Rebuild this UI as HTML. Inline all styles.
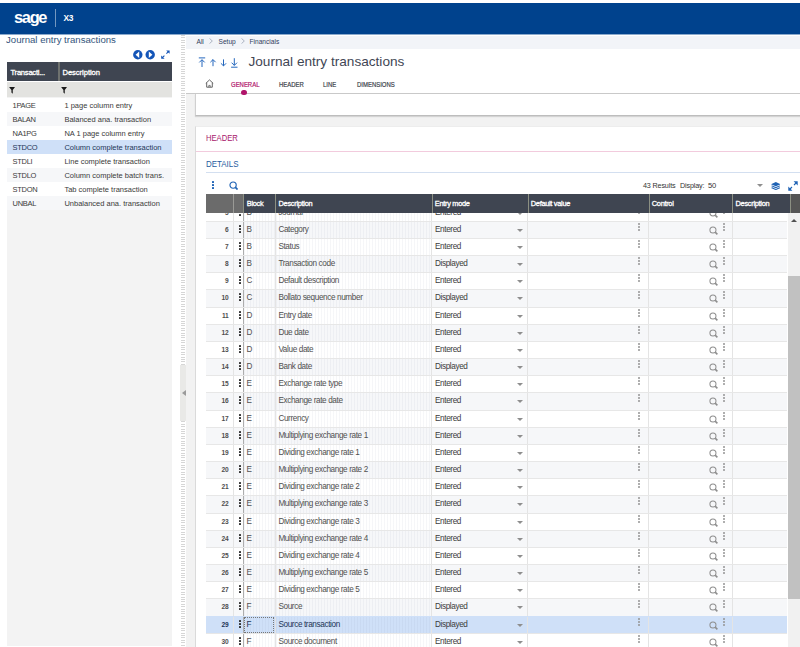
<!DOCTYPE html><html><head><meta charset="utf-8"><title>Journal entry transactions</title><style>*{box-sizing:border-box;margin:0;padding:0}
html,body{width:800px;height:647px;overflow:hidden;background:#fff}
body{position:relative;font-family:"Liberation Sans",sans-serif;color:#333;font-size:8px}
.abs{position:absolute}
.bar{position:absolute;left:0;top:3px;width:800px;height:31px;background:#00428d;border-bottom:1px solid #8aa9cc;box-sizing:content-box}
.logo{position:absolute;left:14px;top:5px;color:#fff;font-weight:700;font-size:16.4px;letter-spacing:-1.3px;line-height:18px}
.bdiv{position:absolute;left:55px;top:6px;width:1px;height:18px;background:rgba(255,255,255,.45)}
.x3{position:absolute;left:63.4px;top:11.4px;color:#fff;font-weight:700;font-size:8.4px;line-height:9px;letter-spacing:-0.2px}
/* left panel */
.ltitle{position:absolute;left:6px;top:33.8px;font-size:9.6px;line-height:11px;color:#34557c;white-space:nowrap}
.lbg{position:absolute;left:7px;top:97px;width:165px;height:549px;background:#f3f3f3}
.lhead{position:absolute;left:7px;top:62.4px;width:165px;height:19px;background:#3f4551;color:#fff;font-weight:400;font-size:7.6px;line-height:19px;white-space:nowrap;-webkit-text-stroke:.3px #fff}
.lhead span{position:absolute;top:0.4px;letter-spacing:-0.05px}
.lhead .sep{position:absolute;left:51px;top:0;width:2px;height:19px;background:#6f726f}
.lfilt{position:absolute;left:7px;top:82.4px;width:165px;height:15px;background:#e3e3e0}
.lrow{position:absolute;left:7px;width:165px;height:14px;background:#fff;font-size:7.5px;line-height:15px;color:#3a3a3a;white-space:nowrap}
.lrow.alt{background:#f6f7f9}
.lrow.sel{background:#cfe0f8;color:#1d3557}
.lrow span{position:absolute;top:0}
.lc{left:5.6px;letter-spacing:-0.3px}.ld{left:57.4px}
/* splitter */
.split{position:absolute;left:180px;top:35px;width:6px;height:612px;background:#fff}
.split:before,.split:after{content:"";position:absolute;top:0;width:1.8px;height:100%;background:repeating-linear-gradient(to bottom,#d6d6d6 0,#d6d6d6 1px,#fff 1px,#fff 2.4px)}
.split:before{left:.9px}.split:after{left:3.3px}
.handle{position:absolute;left:180px;top:365px;width:6px;height:56px;background:#e9e9e7}
.handle:after{content:"";position:absolute;left:1.5px;top:25px;border-right:4px solid #9a9a9a;border-top:3.2px solid transparent;border-bottom:3.2px solid transparent}
/* right */
.rbg{position:absolute;left:186px;top:93px;width:614px;height:554px;background:#f2f2f2}
.crumb{position:absolute;left:186px;top:36px;width:614px;height:12.6px;background:#f2f4f8;font-size:6.6px;line-height:15.5px;color:#2f3d5c;white-space:nowrap}
.crumb span{position:absolute;top:-1.8px}
.crumb .gt{color:#9aa3b5;font-size:8px;transform:scaleX(.6)}
.ptitle{position:absolute;left:248.5px;top:54px;font-size:13.62px;line-height:16px;color:#3f4654;white-space:nowrap}
.tabs{position:absolute;left:0;top:79.6px;font-size:7px;line-height:10px;color:#3a3f4a;white-space:nowrap}
.tabs span{position:absolute;top:0;transform:scaleX(.85);transform-origin:0 0;-webkit-text-stroke:.2px currentColor}
.tabs .on{color:#b0146a}
.tabdot{position:absolute;left:241.3px;top:90px;width:5.4px;height:5.4px;border-radius:50%;background:#b0146a}
.hline{position:absolute;left:186px;top:92.5px;width:614px;height:1.5px;background:#c9c9c9}
.card1{position:absolute;left:195px;top:94px;width:610px;height:22px;background:#fff;border-left:1px solid #d0d0d0;border-bottom:1px solid #bdbdbd;box-shadow:0 1px 1px rgba(0,0,0,.12)}
.card2{position:absolute;left:195px;top:126px;width:610px;height:530px;background:#fff;border-left:1px solid #dadada;border-top:1px solid #ededed}
.sech{position:absolute;left:206px;top:132.5px;font-size:8.7px;line-height:10px;color:#a8176b;transform:scaleX(.88);transform-origin:0 0}
.pinkline{position:absolute;left:196px;top:150.5px;width:604px;height:1px;background:#f2cbdd}
.secd{position:absolute;left:206px;top:158.6px;font-size:8.7px;line-height:10px;color:#1f5c9e;transform:scaleX(.915);transform-origin:0 0}
.blueline{position:absolute;left:206px;top:171.6px;width:594px;height:1.4px;background:#d3dff0}
.results{position:absolute;top:181px;font-size:7.2px;line-height:9px;color:#333;white-space:nowrap;letter-spacing:-0.15px}
/* grid header */
.gh{position:absolute;top:194px;height:19px;background:#3f4551;color:#fff;font-weight:400;font-size:7.4px;line-height:19px;white-space:nowrap;letter-spacing:-0.3px;-webkit-text-stroke:.3px #fff;padding-left:2.2px;border-left:1.4px solid #8b8f82}
.ghg{position:absolute;top:194px;height:19px;background:#6b6b6b}
/* grid */
.grid{position:absolute;left:206px;width:594px;overflow:hidden;background:#fff}
.grow{position:absolute;left:0;width:581px;background:#fff;border-top:1px solid #e7e7e7;font-size:8.2px;line-height:15px;color:#505050;white-space:nowrap;letter-spacing:-0.38px}
.grow.alt{background:#f6f7f9}
.grow.sel{background:#cfe0f8;border-top-color:#cfe0f8}
.grow.sel .cn{color:#2b4f82}
.grow.sel .cb:after{content:"";position:absolute;left:0;top:0;right:1px;bottom:0;border:1px dotted #777}
.grow.sel .c{color:#1d3557}
.c{position:absolute;top:0;height:100%;border-right:1px solid #e4e4e4}
.cn{left:0;width:28px;text-align:right;font-size:6.6px;font-weight:700;color:#4f4f4f;letter-spacing:-0.25px}
.cn span{padding-right:4.6px}
.ck{left:28px;width:10px}
.cb{left:37.4px;width:32.6px;border-left:1.4px solid #adadad}
.cd{left:70px;width:156px}
.cm{left:226px;width:96px}
.cv{left:322px;width:121px}
.cc{left:443px;width:84px}
.ce{left:527px;width:54px;border-right:none}
.cb span{padding-left:2.2px}.cd span{padding-left:2.4px}.cm span{padding-left:3px;color:#3c3c3c}
.dis{background-image:repeating-linear-gradient(to right,rgba(120,130,160,.07) 0,rgba(120,130,160,.07) 1px,transparent 1px,transparent 3px)}
.kb{position:absolute;left:5px;top:3px;width:2px;height:2px;background:#333;border-radius:.5px;box-shadow:0 3px 0 #333,0 6px 0 #333}
.kg{position:absolute;right:8px;top:2px;width:2px;height:2px;background:#959595;border-radius:50%;box-shadow:0 3px 0 #959595,0 6px 0 #959595}
.cc .kg{right:7.5px;top:1px}
.cv .kg{top:1px}
.dd{position:absolute;right:4.2px;top:7px;border-top:3.1px solid #8e8e8e;border-left:3.1px solid transparent;border-right:3.1px solid transparent}
.sg{position:absolute;left:59.6px;top:3.6px;width:9.2px;height:9.2px}
/* scrollbar */
.sb{position:absolute;left:787.5px;top:213px;width:12.5px;height:434px;background:#f1f1f1}
.sbt{position:absolute;left:788px;top:276px;width:12px;height:323px;background:#c1c1c1}
.sba{position:absolute;left:790.8px;top:218.6px;border-bottom:3px solid #505050;border-left:3px solid transparent;border-right:3px solid transparent}
</style></head><body>
<div class="bar"><div class="logo">sage</div><div class="bdiv"></div><div class="x3">X3</div></div>
<div class="ltitle">Journal entry transactions</div>
<svg class="abs" style="left:133px;top:50px;width:38px;height:10px" viewBox="0 0 38 10">
<circle cx="4.8" cy="4.8" r="4.7" fill="#1455b8"/><path d="M6.2 1.6 L2.6 4.8 L6.2 8 Z" fill="#fff"/>
<circle cx="17.2" cy="4.8" r="4.7" fill="#1455b8"/><path d="M15.8 1.6 L19.4 4.8 L15.8 8 Z" fill="#fff"/>
<g stroke="#1455b8" stroke-width="1.1" fill="#1455b8"><path d="M29.4 7.6 L31.4 5.6 M33.4 3.6 L35.4 1.6" fill="none"/><path d="M28.2 8.8 L28.2 5.4 L31.6 8.8 Z M36.6 0.4 L36.6 3.8 L33.2 0.4 Z" stroke="none"/></g>
</svg>
<div class="lbg"></div>
<div class="lhead"><span style="left:3.5px;letter-spacing:-0.25px">Transacti...</span><i class="sep"></i><span style="left:55.5px">Description</span></div>
<div class="lfilt">
<svg class="abs" style="left:1.6px;top:4.4px;width:6.2px;height:6.8px" viewBox="0 0 7 8"><path d="M0 0 H7 L4.3 3.4 V8 L2.7 6.6 V3.4 Z" fill="#1a1a1a"/></svg>
<svg class="abs" style="left:54px;top:4.4px;width:6.2px;height:6.8px" viewBox="0 0 7 8"><path d="M0 0 H7 L4.3 3.4 V8 L2.7 6.6 V3.4 Z" fill="#1a1a1a"/></svg>
</div>
<div class="split"></div><div class="handle"></div>
<div class="rbg"></div>
<div class="crumb"><span style="left:10.5px">All</span><svg class="abs" style="left:23.4px;top:2.4px;width:4px;height:6px" viewBox="0 0 4 6"><path d="M0.5 0.4 L3.3 3 L0.5 5.6" fill="none" stroke="#9aa3b5" stroke-width=".8"/></svg><span style="left:32.5px">Setup</span><svg class="abs" style="left:55.2px;top:2.4px;width:4px;height:6px" viewBox="0 0 4 6"><path d="M0.5 0.4 L3.3 3 L0.5 5.6" fill="none" stroke="#9aa3b5" stroke-width=".8"/></svg><span style="left:63.5px">Financials</span></div>
<svg class="abs" style="left:197px;top:56px;width:43px;height:13px" viewBox="0 0 43 13" fill="none" stroke="#2467bd" stroke-width="1">
<path d="M1.8 1.9 H8.2 M5 3.8 V11 M2.3 6.4 L5 3.7 L7.7 6.4"/>
<path d="M16 3.6 V10.2 M13.4 6.2 L16 3.6 L18.6 6.2"/>
<path d="M26.5 3.4 V9.8 M23.9 7.3 L26.5 9.9 L29.1 7.3"/>
<path d="M34.1 11.2 H40.5 M37.3 2.2 V9.3 M34.6 6.7 L37.3 9.4 L40 6.7"/>
</svg>
<div class="ptitle">Journal entry transactions</div>
<svg class="abs" style="left:205px;top:79px;width:9px;height:9px" viewBox="0 0 9 9" fill="none" stroke="#555" stroke-width="0.9"><path d="M0.8 4.4 L4.5 0.9 L8.2 4.4 M1.7 3.8 V8.2 H7.3 V3.8"/><path d="M3.8 8.2 V6.4 H5.2 V8.2" stroke-width="0.7"/></svg>
<div class="tabs"><span class="on" style="left:230.5px">GENERAL</span><span style="left:279px">HEADER</span><span style="left:323.3px">LINE</span><span style="left:357px">DIMENSIONS</span></div>
<div class="hline"></div>
<div class="card1"></div>
<div class="card2"></div>
<div class="tabdot"></div>
<div class="sech">HEADER</div>
<div class="pinkline"></div>
<div class="secd">DETAILS</div>
<div class="blueline"></div>
<i class="abs" style="left:211.6px;top:181.4px;width:2px;height:2px;border-radius:.6px;background:#1f63b5;box-shadow:0 3px 0 #1f63b5,0 6px 0 #1f63b5"></i>
<svg class="abs" style="left:228.8px;top:180.8px;width:9.5px;height:9.5px" viewBox="0 0 10 10"><circle cx="4.3" cy="4.3" r="3.3" fill="none" stroke="#1f63b5" stroke-width="1.2"/><path d="M6.8 6.8 L9 9" stroke="#1f63b5" stroke-width="1.8"/></svg>
<div class="results" style="left:643px">43 Results</div>
<div class="results" style="left:680px">Display:</div>
<div class="results" style="left:708px;font-size:7.6px">50</div>
<i class="abs" style="left:756.8px;top:184.2px;border-top:3.1px solid #8e8e8e;border-left:3.1px solid transparent;border-right:3.1px solid transparent"></i>
<svg class="abs" style="left:770.5px;top:181.6px;width:9.6px;height:8.4px" viewBox="0 0 10 8.6" fill="#1f63b5"><path d="M5 0 L10 2.2 L5 4.4 L0 2.2 Z"/><path d="M0 4.1 L1.3 3.5 L5 5.2 L8.7 3.5 L10 4.1 L5 6.4 Z"/><path d="M0 6.1 L1.3 5.5 L5 7.2 L8.7 5.5 L10 6.1 L5 8.4 Z"/></svg>
<svg class="abs" style="left:788px;top:181px;width:10px;height:10px" viewBox="0 0 10 10" fill="#1f63b5" stroke="#1f63b5" stroke-width="1.1"><path d="M1.5 8.5 L4 6 M6 4 L8.5 1.5" fill="none"/><path d="M0.3 9.7 V5.6 L4.4 9.7 Z M9.7 0.3 V4.4 L5.6 0.3 Z" stroke="none"/></svg>
<div class="ghg" style="left:206px;width:38px;background:#9a9a96"></div><div class="ghg" style="left:206px;width:27.4px"></div>
<div class="ghg" style="left:234.4px;width:8.6px"></div>
<div class="gh" style="left:243px;width:33px;border-left-width:1px;padding-left:2.8px">Block</div>
<div class="gh" style="left:275.4px;width:157px">Description</div>
<div class="gh" style="left:431.6px;width:97px">Entry mode</div>
<div class="gh" style="left:527.6px;width:122px">Default value</div>
<div class="gh" style="left:648.6px;width:85px">Control</div>
<div class="gh" style="left:732.4px;width:58px">Description</div>
<div class="gh" style="left:789.6px;width:11px;background:#555"></div>

<div class="llist">
<div class="lrow" style="top:98px"><span class="lc">1PAGE</span><span class="ld">1 page column entry</span></div>
<div class="lrow alt" style="top:112px"><span class="lc">BALAN</span><span class="ld">Balanced ana. transaction</span></div>
<div class="lrow" style="top:126px"><span class="lc">NA1PG</span><span class="ld">NA 1 page column entry</span></div>
<div class="lrow alt sel" style="top:140px"><span class="lc">STDCO</span><span class="ld">Column complete transaction</span></div>
<div class="lrow" style="top:154px"><span class="lc">STDLI</span><span class="ld">Line complete transaction</span></div>
<div class="lrow alt" style="top:168px"><span class="lc">STDLO</span><span class="ld">Column complete batch trans.</span></div>
<div class="lrow" style="top:182px"><span class="lc">STDON</span><span class="ld">Tab complete transaction</span></div>
<div class="lrow alt" style="top:196px"><span class="lc">UNBAL</span><span class="ld">Unbalanced ana. transaction</span></div>
</div>
<div class="grid" style="top:213px;height:434px">
<div class="grow" style="top:-9px;height:17px"><div class="c cn"><span>5</span></div><div class="c ck"><i class="kb"></i></div><div class="c cb dis"><span>B</span></div><div class="c cd dis"><span>Journal</span></div><div class="c cm"><span>Entered</span><i class="dd"></i></div><div class="c cv"><i class="kg"></i></div><div class="c cc"><svg class="sg" viewBox="0 0 10 10"><circle cx="4.3" cy="4.3" r="3.3" fill="none" stroke="#8e8e8e" stroke-width="1.1"/><path d="M6.7 6.7 L9.1 9.1" stroke="#8e8e8e" stroke-width="1.7"/></svg><i class="kg"></i></div><div class="c ce"></div></div>
<div class="grow alt" style="top:8px;height:17px"><div class="c cn"><span>6</span></div><div class="c ck"><i class="kb"></i></div><div class="c cb dis"><span>B</span></div><div class="c cd dis"><span>Category</span></div><div class="c cm"><span>Entered</span><i class="dd"></i></div><div class="c cv"><i class="kg"></i></div><div class="c cc"><svg class="sg" viewBox="0 0 10 10"><circle cx="4.3" cy="4.3" r="3.3" fill="none" stroke="#8e8e8e" stroke-width="1.1"/><path d="M6.7 6.7 L9.1 9.1" stroke="#8e8e8e" stroke-width="1.7"/></svg><i class="kg"></i></div><div class="c ce"></div></div>
<div class="grow" style="top:25px;height:17px"><div class="c cn"><span>7</span></div><div class="c ck"><i class="kb"></i></div><div class="c cb dis"><span>B</span></div><div class="c cd dis"><span>Status</span></div><div class="c cm"><span>Entered</span><i class="dd"></i></div><div class="c cv"><i class="kg"></i></div><div class="c cc"><svg class="sg" viewBox="0 0 10 10"><circle cx="4.3" cy="4.3" r="3.3" fill="none" stroke="#8e8e8e" stroke-width="1.1"/><path d="M6.7 6.7 L9.1 9.1" stroke="#8e8e8e" stroke-width="1.7"/></svg><i class="kg"></i></div><div class="c ce"></div></div>
<div class="grow alt" style="top:42px;height:17px"><div class="c cn"><span>8</span></div><div class="c ck"><i class="kb"></i></div><div class="c cb dis"><span>B</span></div><div class="c cd dis"><span>Transaction code</span></div><div class="c cm"><span>Displayed</span><i class="dd"></i></div><div class="c cv"><i class="kg"></i></div><div class="c cc"><svg class="sg" viewBox="0 0 10 10"><circle cx="4.3" cy="4.3" r="3.3" fill="none" stroke="#8e8e8e" stroke-width="1.1"/><path d="M6.7 6.7 L9.1 9.1" stroke="#8e8e8e" stroke-width="1.7"/></svg><i class="kg"></i></div><div class="c ce"></div></div>
<div class="grow" style="top:59px;height:17px"><div class="c cn"><span>9</span></div><div class="c ck"><i class="kb"></i></div><div class="c cb dis"><span>C</span></div><div class="c cd dis"><span>Default description</span></div><div class="c cm"><span>Entered</span><i class="dd"></i></div><div class="c cv"><i class="kg"></i></div><div class="c cc"><svg class="sg" viewBox="0 0 10 10"><circle cx="4.3" cy="4.3" r="3.3" fill="none" stroke="#8e8e8e" stroke-width="1.1"/><path d="M6.7 6.7 L9.1 9.1" stroke="#8e8e8e" stroke-width="1.7"/></svg><i class="kg"></i></div><div class="c ce"></div></div>
<div class="grow alt" style="top:76px;height:18px"><div class="c cn"><span>10</span></div><div class="c ck"><i class="kb"></i></div><div class="c cb dis"><span>C</span></div><div class="c cd dis"><span>Bollato sequence number</span></div><div class="c cm"><span>Displayed</span><i class="dd"></i></div><div class="c cv"><i class="kg"></i></div><div class="c cc"><svg class="sg" viewBox="0 0 10 10"><circle cx="4.3" cy="4.3" r="3.3" fill="none" stroke="#8e8e8e" stroke-width="1.1"/><path d="M6.7 6.7 L9.1 9.1" stroke="#8e8e8e" stroke-width="1.7"/></svg><i class="kg"></i></div><div class="c ce"></div></div>
<div class="grow" style="top:94px;height:17px"><div class="c cn"><span>11</span></div><div class="c ck"><i class="kb"></i></div><div class="c cb dis"><span>D</span></div><div class="c cd dis"><span>Entry date</span></div><div class="c cm"><span>Entered</span><i class="dd"></i></div><div class="c cv"><i class="kg"></i></div><div class="c cc"><svg class="sg" viewBox="0 0 10 10"><circle cx="4.3" cy="4.3" r="3.3" fill="none" stroke="#8e8e8e" stroke-width="1.1"/><path d="M6.7 6.7 L9.1 9.1" stroke="#8e8e8e" stroke-width="1.7"/></svg><i class="kg"></i></div><div class="c ce"></div></div>
<div class="grow alt" style="top:111px;height:17px"><div class="c cn"><span>12</span></div><div class="c ck"><i class="kb"></i></div><div class="c cb dis"><span>D</span></div><div class="c cd dis"><span>Due date</span></div><div class="c cm"><span>Entered</span><i class="dd"></i></div><div class="c cv"><i class="kg"></i></div><div class="c cc"><svg class="sg" viewBox="0 0 10 10"><circle cx="4.3" cy="4.3" r="3.3" fill="none" stroke="#8e8e8e" stroke-width="1.1"/><path d="M6.7 6.7 L9.1 9.1" stroke="#8e8e8e" stroke-width="1.7"/></svg><i class="kg"></i></div><div class="c ce"></div></div>
<div class="grow" style="top:128px;height:17px"><div class="c cn"><span>13</span></div><div class="c ck"><i class="kb"></i></div><div class="c cb dis"><span>D</span></div><div class="c cd dis"><span>Value date</span></div><div class="c cm"><span>Entered</span><i class="dd"></i></div><div class="c cv"><i class="kg"></i></div><div class="c cc"><svg class="sg" viewBox="0 0 10 10"><circle cx="4.3" cy="4.3" r="3.3" fill="none" stroke="#8e8e8e" stroke-width="1.1"/><path d="M6.7 6.7 L9.1 9.1" stroke="#8e8e8e" stroke-width="1.7"/></svg><i class="kg"></i></div><div class="c ce"></div></div>
<div class="grow alt" style="top:145px;height:17px"><div class="c cn"><span>14</span></div><div class="c ck"><i class="kb"></i></div><div class="c cb dis"><span>D</span></div><div class="c cd dis"><span>Bank date</span></div><div class="c cm"><span>Displayed</span><i class="dd"></i></div><div class="c cv"><i class="kg"></i></div><div class="c cc"><svg class="sg" viewBox="0 0 10 10"><circle cx="4.3" cy="4.3" r="3.3" fill="none" stroke="#8e8e8e" stroke-width="1.1"/><path d="M6.7 6.7 L9.1 9.1" stroke="#8e8e8e" stroke-width="1.7"/></svg><i class="kg"></i></div><div class="c ce"></div></div>
<div class="grow" style="top:162px;height:17px"><div class="c cn"><span>15</span></div><div class="c ck"><i class="kb"></i></div><div class="c cb dis"><span>E</span></div><div class="c cd dis"><span>Exchange rate type</span></div><div class="c cm"><span>Entered</span><i class="dd"></i></div><div class="c cv"><i class="kg"></i></div><div class="c cc"><svg class="sg" viewBox="0 0 10 10"><circle cx="4.3" cy="4.3" r="3.3" fill="none" stroke="#8e8e8e" stroke-width="1.1"/><path d="M6.7 6.7 L9.1 9.1" stroke="#8e8e8e" stroke-width="1.7"/></svg><i class="kg"></i></div><div class="c ce"></div></div>
<div class="grow alt" style="top:179px;height:18px"><div class="c cn"><span>16</span></div><div class="c ck"><i class="kb"></i></div><div class="c cb dis"><span>E</span></div><div class="c cd dis"><span>Exchange rate date</span></div><div class="c cm"><span>Entered</span><i class="dd"></i></div><div class="c cv"><i class="kg"></i></div><div class="c cc"><svg class="sg" viewBox="0 0 10 10"><circle cx="4.3" cy="4.3" r="3.3" fill="none" stroke="#8e8e8e" stroke-width="1.1"/><path d="M6.7 6.7 L9.1 9.1" stroke="#8e8e8e" stroke-width="1.7"/></svg><i class="kg"></i></div><div class="c ce"></div></div>
<div class="grow" style="top:197px;height:17px"><div class="c cn"><span>17</span></div><div class="c ck"><i class="kb"></i></div><div class="c cb dis"><span>E</span></div><div class="c cd dis"><span>Currency</span></div><div class="c cm"><span>Entered</span><i class="dd"></i></div><div class="c cv"><i class="kg"></i></div><div class="c cc"><svg class="sg" viewBox="0 0 10 10"><circle cx="4.3" cy="4.3" r="3.3" fill="none" stroke="#8e8e8e" stroke-width="1.1"/><path d="M6.7 6.7 L9.1 9.1" stroke="#8e8e8e" stroke-width="1.7"/></svg><i class="kg"></i></div><div class="c ce"></div></div>
<div class="grow alt" style="top:214px;height:17px"><div class="c cn"><span>18</span></div><div class="c ck"><i class="kb"></i></div><div class="c cb dis"><span>E</span></div><div class="c cd dis"><span>Multiplying exchange rate 1</span></div><div class="c cm"><span>Entered</span><i class="dd"></i></div><div class="c cv"><i class="kg"></i></div><div class="c cc"><svg class="sg" viewBox="0 0 10 10"><circle cx="4.3" cy="4.3" r="3.3" fill="none" stroke="#8e8e8e" stroke-width="1.1"/><path d="M6.7 6.7 L9.1 9.1" stroke="#8e8e8e" stroke-width="1.7"/></svg><i class="kg"></i></div><div class="c ce"></div></div>
<div class="grow" style="top:231px;height:17px"><div class="c cn"><span>19</span></div><div class="c ck"><i class="kb"></i></div><div class="c cb dis"><span>E</span></div><div class="c cd dis"><span>Dividing exchange rate 1</span></div><div class="c cm"><span>Entered</span><i class="dd"></i></div><div class="c cv"><i class="kg"></i></div><div class="c cc"><svg class="sg" viewBox="0 0 10 10"><circle cx="4.3" cy="4.3" r="3.3" fill="none" stroke="#8e8e8e" stroke-width="1.1"/><path d="M6.7 6.7 L9.1 9.1" stroke="#8e8e8e" stroke-width="1.7"/></svg><i class="kg"></i></div><div class="c ce"></div></div>
<div class="grow alt" style="top:248px;height:17px"><div class="c cn"><span>20</span></div><div class="c ck"><i class="kb"></i></div><div class="c cb dis"><span>E</span></div><div class="c cd dis"><span>Multiplying exchange rate 2</span></div><div class="c cm"><span>Entered</span><i class="dd"></i></div><div class="c cv"><i class="kg"></i></div><div class="c cc"><svg class="sg" viewBox="0 0 10 10"><circle cx="4.3" cy="4.3" r="3.3" fill="none" stroke="#8e8e8e" stroke-width="1.1"/><path d="M6.7 6.7 L9.1 9.1" stroke="#8e8e8e" stroke-width="1.7"/></svg><i class="kg"></i></div><div class="c ce"></div></div>
<div class="grow" style="top:265px;height:17px"><div class="c cn"><span>21</span></div><div class="c ck"><i class="kb"></i></div><div class="c cb dis"><span>E</span></div><div class="c cd dis"><span>Dividing exchange rate 2</span></div><div class="c cm"><span>Entered</span><i class="dd"></i></div><div class="c cv"><i class="kg"></i></div><div class="c cc"><svg class="sg" viewBox="0 0 10 10"><circle cx="4.3" cy="4.3" r="3.3" fill="none" stroke="#8e8e8e" stroke-width="1.1"/><path d="M6.7 6.7 L9.1 9.1" stroke="#8e8e8e" stroke-width="1.7"/></svg><i class="kg"></i></div><div class="c ce"></div></div>
<div class="grow alt" style="top:282px;height:18px"><div class="c cn"><span>22</span></div><div class="c ck"><i class="kb"></i></div><div class="c cb dis"><span>E</span></div><div class="c cd dis"><span>Multiplying exchange rate 3</span></div><div class="c cm"><span>Entered</span><i class="dd"></i></div><div class="c cv"><i class="kg"></i></div><div class="c cc"><svg class="sg" viewBox="0 0 10 10"><circle cx="4.3" cy="4.3" r="3.3" fill="none" stroke="#8e8e8e" stroke-width="1.1"/><path d="M6.7 6.7 L9.1 9.1" stroke="#8e8e8e" stroke-width="1.7"/></svg><i class="kg"></i></div><div class="c ce"></div></div>
<div class="grow" style="top:300px;height:17px"><div class="c cn"><span>23</span></div><div class="c ck"><i class="kb"></i></div><div class="c cb dis"><span>E</span></div><div class="c cd dis"><span>Dividing exchange rate 3</span></div><div class="c cm"><span>Entered</span><i class="dd"></i></div><div class="c cv"><i class="kg"></i></div><div class="c cc"><svg class="sg" viewBox="0 0 10 10"><circle cx="4.3" cy="4.3" r="3.3" fill="none" stroke="#8e8e8e" stroke-width="1.1"/><path d="M6.7 6.7 L9.1 9.1" stroke="#8e8e8e" stroke-width="1.7"/></svg><i class="kg"></i></div><div class="c ce"></div></div>
<div class="grow alt" style="top:317px;height:17px"><div class="c cn"><span>24</span></div><div class="c ck"><i class="kb"></i></div><div class="c cb dis"><span>E</span></div><div class="c cd dis"><span>Multiplying exchange rate 4</span></div><div class="c cm"><span>Entered</span><i class="dd"></i></div><div class="c cv"><i class="kg"></i></div><div class="c cc"><svg class="sg" viewBox="0 0 10 10"><circle cx="4.3" cy="4.3" r="3.3" fill="none" stroke="#8e8e8e" stroke-width="1.1"/><path d="M6.7 6.7 L9.1 9.1" stroke="#8e8e8e" stroke-width="1.7"/></svg><i class="kg"></i></div><div class="c ce"></div></div>
<div class="grow" style="top:334px;height:17px"><div class="c cn"><span>25</span></div><div class="c ck"><i class="kb"></i></div><div class="c cb dis"><span>E</span></div><div class="c cd dis"><span>Dividing exchange rate 4</span></div><div class="c cm"><span>Entered</span><i class="dd"></i></div><div class="c cv"><i class="kg"></i></div><div class="c cc"><svg class="sg" viewBox="0 0 10 10"><circle cx="4.3" cy="4.3" r="3.3" fill="none" stroke="#8e8e8e" stroke-width="1.1"/><path d="M6.7 6.7 L9.1 9.1" stroke="#8e8e8e" stroke-width="1.7"/></svg><i class="kg"></i></div><div class="c ce"></div></div>
<div class="grow alt" style="top:351px;height:17px"><div class="c cn"><span>26</span></div><div class="c ck"><i class="kb"></i></div><div class="c cb dis"><span>E</span></div><div class="c cd dis"><span>Multiplying exchange rate 5</span></div><div class="c cm"><span>Entered</span><i class="dd"></i></div><div class="c cv"><i class="kg"></i></div><div class="c cc"><svg class="sg" viewBox="0 0 10 10"><circle cx="4.3" cy="4.3" r="3.3" fill="none" stroke="#8e8e8e" stroke-width="1.1"/><path d="M6.7 6.7 L9.1 9.1" stroke="#8e8e8e" stroke-width="1.7"/></svg><i class="kg"></i></div><div class="c ce"></div></div>
<div class="grow" style="top:368px;height:17px"><div class="c cn"><span>27</span></div><div class="c ck"><i class="kb"></i></div><div class="c cb dis"><span>E</span></div><div class="c cd dis"><span>Dividing exchange rate 5</span></div><div class="c cm"><span>Entered</span><i class="dd"></i></div><div class="c cv"><i class="kg"></i></div><div class="c cc"><svg class="sg" viewBox="0 0 10 10"><circle cx="4.3" cy="4.3" r="3.3" fill="none" stroke="#8e8e8e" stroke-width="1.1"/><path d="M6.7 6.7 L9.1 9.1" stroke="#8e8e8e" stroke-width="1.7"/></svg><i class="kg"></i></div><div class="c ce"></div></div>
<div class="grow alt" style="top:385px;height:18px"><div class="c cn"><span>28</span></div><div class="c ck"><i class="kb"></i></div><div class="c cb dis"><span>F</span></div><div class="c cd dis"><span>Source</span></div><div class="c cm"><span>Displayed</span><i class="dd"></i></div><div class="c cv"><i class="kg"></i></div><div class="c cc"><svg class="sg" viewBox="0 0 10 10"><circle cx="4.3" cy="4.3" r="3.3" fill="none" stroke="#8e8e8e" stroke-width="1.1"/><path d="M6.7 6.7 L9.1 9.1" stroke="#8e8e8e" stroke-width="1.7"/></svg><i class="kg"></i></div><div class="c ce"></div></div>
<div class="grow sel" style="top:403px;height:17px"><div class="c cn"><span>29</span></div><div class="c ck"><i class="kb"></i></div><div class="c cb dis"><span>F</span></div><div class="c cd dis"><span>Source transaction</span></div><div class="c cm"><span>Displayed</span><i class="dd"></i></div><div class="c cv"><i class="kg"></i></div><div class="c cc"><svg class="sg" viewBox="0 0 10 10"><circle cx="4.3" cy="4.3" r="3.3" fill="none" stroke="#8e8e8e" stroke-width="1.1"/><path d="M6.7 6.7 L9.1 9.1" stroke="#8e8e8e" stroke-width="1.7"/></svg><i class="kg"></i></div><div class="c ce"></div></div>
<div class="grow" style="top:420px;height:17px"><div class="c cn"><span>30</span></div><div class="c ck"><i class="kb"></i></div><div class="c cb dis"><span>F</span></div><div class="c cd dis"><span>Source document</span></div><div class="c cm"><span>Entered</span><i class="dd"></i></div><div class="c cv"><i class="kg"></i></div><div class="c cc"><svg class="sg" viewBox="0 0 10 10"><circle cx="4.3" cy="4.3" r="3.3" fill="none" stroke="#8e8e8e" stroke-width="1.1"/><path d="M6.7 6.7 L9.1 9.1" stroke="#8e8e8e" stroke-width="1.7"/></svg><i class="kg"></i></div><div class="c ce"></div></div>
</div>
<div class="sb"></div><div class="sbt"></div><i class="sba"></i>

</body></html>
